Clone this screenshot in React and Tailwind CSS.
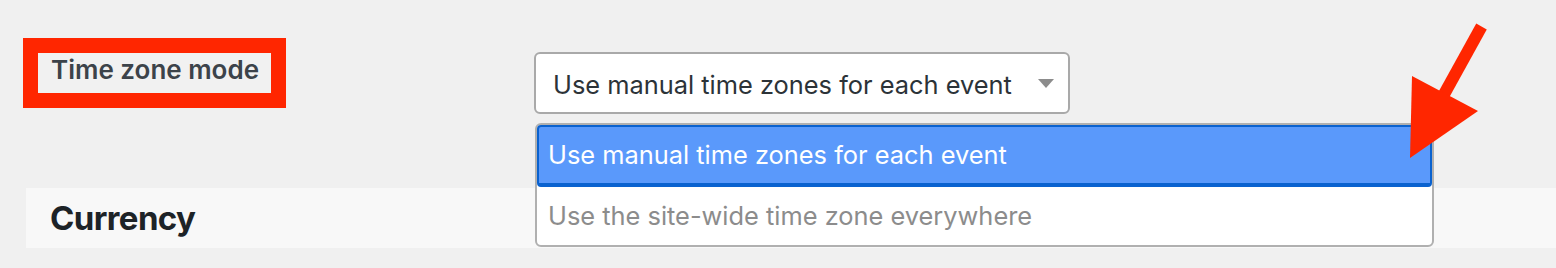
export default function App() {
  return (
    <div className="relative w-[1556px] h-[268px] overflow-hidden bg-[#f0f0f0] font-['Inter',sans-serif]">
      {/* Time zone mode row */}
      <div className="flex items-start pt-[38px] pl-[23px]">
        <div className="border-[15px] border-[#ff2600] w-[263px] h-[70px]">
          <div className="h-full bg-[#f1f1f1] pl-[13px] text-[26px] leading-[33px] font-semibold whitespace-nowrap text-[#3c434a]">
            Time zone mode
          </div>
        </div>
        <div className="ml-[248px] mt-[14px] w-[536px] h-[62px] flex items-center justify-between bg-white border-2 border-[#a9a9a9] rounded-[6px] pl-[17px] pr-[14px]">
          <span className="text-[25.4px] leading-[30px] mt-[4px] text-[#2c3338]">
            Use manual time zones for each event
          </span>
          <svg width="16" height="10" viewBox="0 0 16 10" className="mt-[2px]">
            <polygon points="0,0 16,0 8,9" fill="#8c8c8c" />
          </svg>
        </div>
      </div>

      {/* Currency band */}
      <div className="ml-[26px] mt-[74px] h-[60px] bg-[#f8f8f8] flex items-center pl-[24px]">
        <h2 className="text-[33px] leading-[40px] font-bold tracking-[-0.6px] text-[#1d2327]">Currency</h2>
      </div>

      {/* Open dropdown menu */}
      <div className="absolute left-[535px] top-[123px] w-[899px] h-[124px] bg-white border-2 border-[#b0b0b0] rounded-[6px] flex flex-col">
        <div className="h-[62px] bg-[#5a99fb] border-2 border-b-[4px] border-[#0a62cf] rounded-[4px] flex items-center pl-[9px]">
          <span className="text-[25.4px] leading-[30px] text-white">Use manual time zones for each event</span>
        </div>
        <div className="flex-1 flex items-center pl-[11px]">
          <span className="text-[25.4px] leading-[30px] text-[#8c8c8c]">Use the site-wide time zone everywhere</span>
        </div>
      </div>

      {/* Annotation arrow */}
      <svg className="absolute left-0 top-0 pointer-events-none" width="1556" height="268" viewBox="0 0 1556 268">
        <line x1="1481.5" y1="26.5" x2="1442" y2="98" stroke="#ff2600" strokeWidth="12" />
        <polygon points="1412,76 1478,111 1410,158" fill="#ff2600" />
      </svg>
    </div>
  );
}
